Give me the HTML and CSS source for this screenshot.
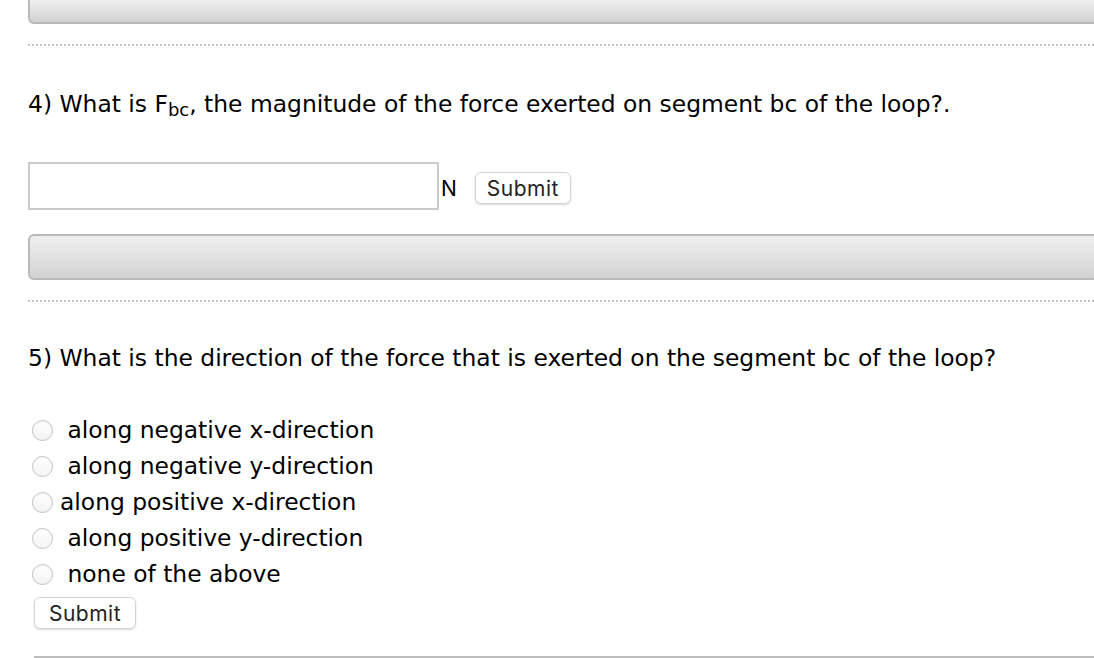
FILE: index.html
```html
<!DOCTYPE html>
<html>
<head>
<meta charset="utf-8">
<link rel="stylesheet" href="styles.css">
</head>
<body>
<div class="page">
  <div class="bar bar-top"></div>
  <div class="dots"></div>
  <p class="question q4">4) What is F<sub>bc</sub>, the magnitude of the force exerted on segment bc of the loop?.</p>
  <div class="answer-row">
    <input class="answer" type="text">
    <span class="unit">N</span>
    <button class="btn btn-inline">Submit</button>
  </div>
  <div class="bar bar-mid"></div>
  <div class="dots"></div>
  <p class="question q5">5) What is the direction of the force that is exerted on the segment bc of the loop?</p>
  <div class="options">
    <label class="option"><input type="radio" name="dir"> along negative x-direction</label>
    <label class="option"><input type="radio" name="dir"> along negative y-direction</label>
    <label class="option"><input type="radio" name="dir">along positive x-direction</label>
    <label class="option"><input type="radio" name="dir"> along positive y-direction</label>
    <label class="option"><input type="radio" name="dir"> none of the above</label>
  </div>
  <button class="btn btn-block">Submit</button>
  <div class="rule"></div>
</div>
</body>
</html>
```
FILE: styles.css
```css
html, body {
  margin: 0;
  padding: 0;
  background: #fff;
  overflow: hidden;
}
.page {
  padding-left: 28px;
  font-family: "DejaVu Sans", "Liberation Sans", sans-serif;
  color: #000;
}
.bar {
  box-sizing: border-box;
  width: calc(100% + 40px);
  border: 2px solid #b9b9b9;
  border-right: none;
  background: linear-gradient(#efefef, #d2d2d2);
}
.bar-top {
  height: 24px;
  border-top: none;
  border-radius: 0 0 0 6px;
}
.bar-mid {
  height: 46px;
  margin-top: 24px;
  border-radius: 6px 0 0 6px;
}
.dots {
  height: 0;
  border-top: 2px dotted #c4c4c4;
  margin-top: 20px;
}
.question {
  margin: 0;
  font-size: 23.4px;
  line-height: 26px;
}
.question sub {
  font-size: 18px;
  vertical-align: -4px;
  line-height: 0;
}
.q4 {
  margin-top: 45px;
}
.q5 {
  margin-top: 43px;
}
.answer-row {
  display: flex;
  align-items: center;
  margin-top: 45px;
  height: 48px;
}
.answer {
  box-sizing: border-box;
  width: 411px;
  height: 48px;
  margin: 0;
  border: 2px solid #cbcbcb;
  background: #fff;
  outline: none;
}
.unit {
  font-family: "Inter", "Liberation Sans", Arial, sans-serif;
  font-size: 21px;
  margin-left: 2px;
  margin-right: 18px;
  margin-top: 4px;
}
.btn {
  box-sizing: border-box;
  height: 32px;
  padding: 0;
  font-family: "Inter", "Liberation Sans", Arial, sans-serif;
  font-size: 21px;
  letter-spacing: 0.5px;
  color: #222;
  background: #fff;
  border: 1px solid #d4d4d4;
  border-radius: 6px;
  box-shadow: 0 1px 2px rgba(0,0,0,0.15);
}
.btn-inline {
  width: 96px;
  margin-top: 4px;
}
.options {
  margin-top: 41px;
  display: flex;
  flex-direction: column;
  padding-left: 5px;
}
.option {
  display: flex;
  align-items: center;
  height: 36px;
  font-size: 23.4px;
  white-space: pre;
}
.option input {
  appearance: none;
  -webkit-appearance: none;
  box-sizing: border-box;
  width: 21px;
  height: 21px;
  margin: 0 7px 0 -1px;
  border: 1px solid #c3c3c3;
  border-radius: 50%;
  background: linear-gradient(#ffffff, #f3f3f3);
  box-shadow: inset 0 1px 1px rgba(0,0,0,0.05);
}
.btn-block {
  display: block;
  width: 102px;
  margin-top: 5px;
  margin-left: 6px;
}
.rule {
  margin-top: 27px;
  margin-left: 6px;
  height: 0;
  border-top: 2px solid #bdbdbd;
}
```
